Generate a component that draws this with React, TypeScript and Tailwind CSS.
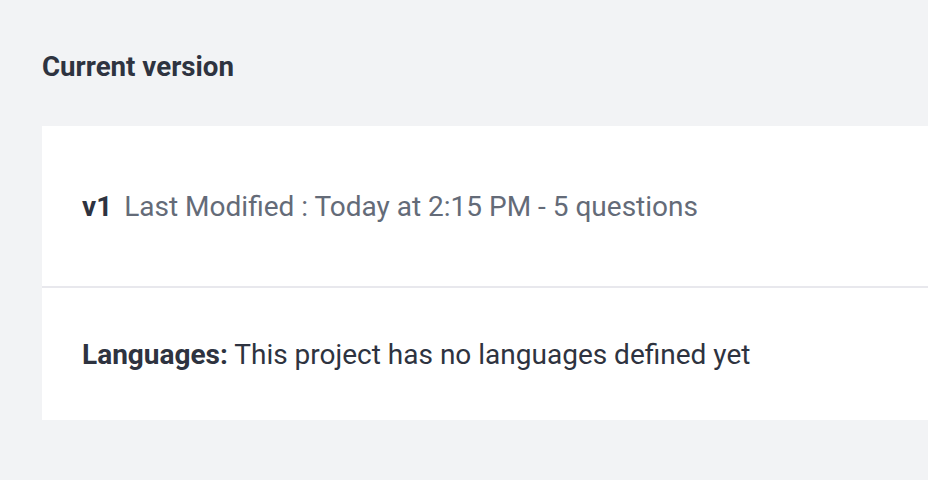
import React from "react";

export default function App() {
  return (
    <div
      className="min-h-[480px] w-full overflow-hidden bg-[#f2f3f5] pl-[42px] pt-[51px]"
      style={{ fontFamily: "Roboto, 'Noto Sans', sans-serif" }}
    >
      <h2 className="text-[27.7px] font-bold leading-[32px] text-[#2e3340]">
        Current version
      </h2>
      <div className="mt-[43px] w-[900px] bg-white">
        <div className="flex items-baseline border-b-2 border-[#e8e8ed] pl-[40px] pt-[65px] pb-[63px] text-[28px] leading-[32px]">
          <span className="font-bold text-[#2e3340]">v1</span>
          <span className="ml-[12px] text-[#646b78]">
            Last Modified : Today at 2:15 PM - 5 questions
          </span>
        </div>
        <div className="pl-[40px] pt-[51px] pb-[49px] text-[28px] leading-[32px] text-[#2e3340]">
          <span className="font-bold">Languages:</span> This project has no languages defined yet
        </div>
      </div>
    </div>
  );
}
